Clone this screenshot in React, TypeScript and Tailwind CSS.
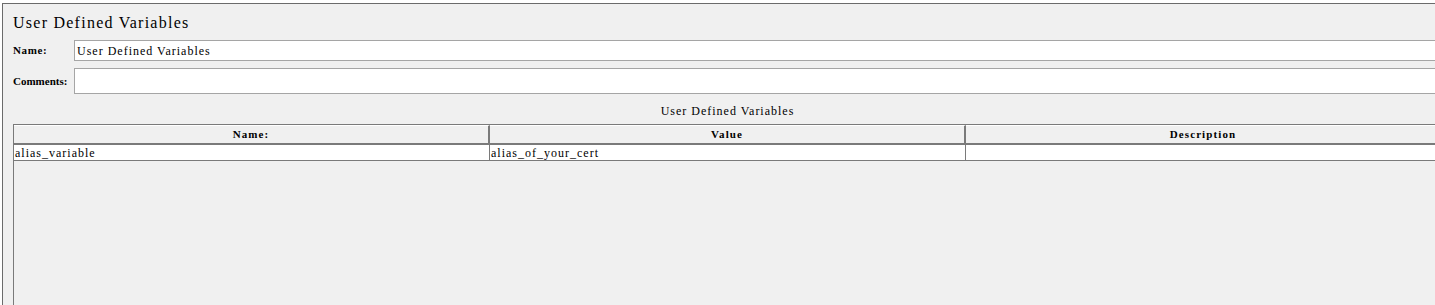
import React from "react";

const serif = "font-['Liberation_Serif','DejaVu_Serif',serif]";

export default function App() {
  const cols = ["Name:", "Value", "Description"];
  const row = ["alias_variable", "alias_of_your_cert", ""];
  const small = "text-[12px] tracking-[1px] leading-[14px]";
  const label = "text-[11px] font-bold whitespace-nowrap";
  return (
    <div className={`w-[1435px] h-[305px] bg-white overflow-hidden text-black ${serif}`}>
      <div className="ml-[2px] mt-[3px] w-[1460px] h-[302px] border-l border-t border-[#6b6b6b] bg-[#f0f0f0] pl-[10px]">
        <div className="pt-[11px] h-[27px] leading-[16px] text-[16px] tracking-[1.25px]">User Defined Variables</div>
        <div className="mt-[9px] flex items-center h-[21px]">
          <div className={`w-[61px] ${label} tracking-[0.6px]`}>Name:</div>
          <div className={`flex-1 h-[21px] bg-white border border-[#a5a5a5] flex items-center pl-[2px] ${small}`}>
            User Defined Variables
          </div>
        </div>
        <div className="mt-[7px] flex items-center h-[26px]">
          <div className={`w-[61px] ${label} tracking-[0px]`}>Comments:</div>
          <div className="flex-1 h-[26px] bg-white border border-[#a5a5a5]" />
        </div>
        <div className={`w-[1429px] mt-[10px] h-[15px] text-center ${small}`}>
          User Defined Variables
        </div>
        <div className="mt-[5px] w-[1430px] h-[200px] border-l border-t border-[#7a7a7a]">
          <div className="grid grid-cols-[476px_476px_476px] h-[20px] border-b-2 border-[#7a7a7a]">
            {cols.map((c) => (
              <div
                key={c}
                className={`border-r-2 border-[#7a7a7a] border-t border-t-white flex items-center justify-center ${label} tracking-[1.1px]`}
              >
                {c}
              </div>
            ))}
          </div>
          <div className="grid grid-cols-[476px_476px_476px] h-[16px] bg-white border-b border-[#7a7a7a]">
            {row.map((c, i) => (
              <div
                key={i}
                className={`border-r border-[#7a7a7a] flex items-center pl-[1px] ${small}`}
              >
                {c}
              </div>
            ))}
          </div>
        </div>
      </div>
    </div>
  );
}
